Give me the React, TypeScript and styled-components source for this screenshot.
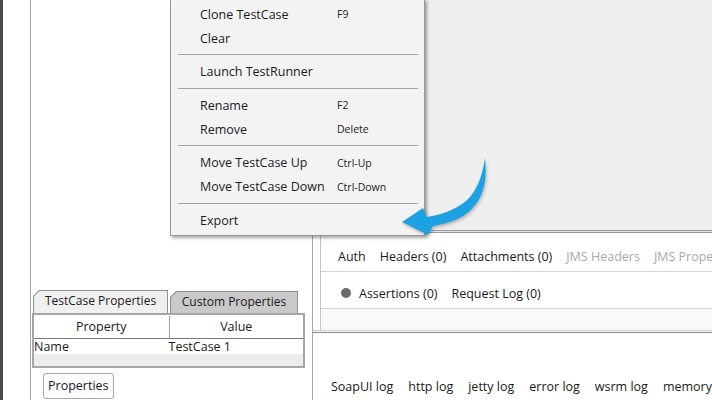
import React from "react";
import styled, { createGlobalStyle } from "styled-components";

type MenuEntry =
  | { kind: "item"; label: string; shortcut?: string }
  | { kind: "sep" };

const menuEntries: MenuEntry[] = [
  { kind: "item", label: "Clone TestCase", shortcut: "F9" },
  { kind: "item", label: "Clear" },
  { kind: "sep" },
  { kind: "item", label: "Launch TestRunner" },
  { kind: "sep" },
  { kind: "item", label: "Rename", shortcut: "F2" },
  { kind: "item", label: "Remove", shortcut: "Delete" },
  { kind: "sep" },
  { kind: "item", label: "Move TestCase Up", shortcut: "Ctrl-Up" },
  { kind: "item", label: "Move TestCase Down", shortcut: "Ctrl-Down" },
  { kind: "sep" },
  { kind: "item", label: "Export" },
];

const requestTabs = [
  { label: "Auth", disabled: false },
  { label: "Headers (0)", disabled: false },
  { label: "Attachments (0)", disabled: false },
  { label: "JMS Headers", disabled: true },
  { label: "JMS Properties", disabled: true },
];

const logTabs = ["SoapUI log", "http log", "jetty log", "error log", "wsrm log", "memory log"];

const App: React.FC = () => {
  return (
    <>
      <GlobalStyle />
      <Screen>
        <Edge />
        <Gutter />

        <LeftPanel>
          <PropsBlock>
            <TabRow>
              <PropTab $active>
                <PropTabFill $active>TestCase Properties</PropTabFill>
              </PropTab>
              <PropTab>
                <PropTabFill>Custom Properties</PropTabFill>
              </PropTab>
            </TabRow>
            <PropTable>
              <HeaderRow>
                <HeaderCell>Property</HeaderCell>
                <HeaderCell $last>Value</HeaderCell>
              </HeaderRow>
              <DataRow>
                <DataCell>Name</DataCell>
                <DataCell>TestCase 1</DataCell>
              </DataRow>
              <Filler />
            </PropTable>
            <ButtonRow>
              <PropsButton>Properties</PropsButton>
            </ButtonRow>
          </PropsBlock>
        </LeftPanel>

        <RightPanel>
          <Editor />
          <EditorRule />
          <Lower>
            <RequestPanel>
              <RequestTabs>
                {requestTabs.map((t) => (
                  <RequestTab key={t.label} $disabled={t.disabled}>
                    {t.label}
                  </RequestTab>
                ))}
              </RequestTabs>
              <AssertRow>
                <StatusDot />
                <RequestTab>Assertions (0)</RequestTab>
                <RequestTab>Request Log (0)</RequestTab>
              </AssertRow>
              <PanelFoot />
            </RequestPanel>
            <PanelRule />
            <LogArea>
              {logTabs.map((l) => (
                <LogTab key={l}>{l}</LogTab>
              ))}
            </LogArea>
          </Lower>
        </RightPanel>

        <Menu>
          {menuEntries.map((e, i) =>
            e.kind === "sep" ? (
              <MenuSep key={i} />
            ) : (
              <MenuItem key={i}>
                <MenuLabel>{e.label}</MenuLabel>
                <MenuShortcut>{e.shortcut}</MenuShortcut>
              </MenuItem>
            )
          )}
        </Menu>

        <Arrow viewBox="390 150 110 95" width="110" height="95">
          <path
            d="M485 158 C488 184 482 204 463 216 C453 222 443 224 433 226 L428 235 L402 222 L423 208 L427 217 C445 214 460 208 470 197 C479 186 483 172 485 158 Z"
            fill="#1ca2e3"
          />
        </Arrow>
      </Screen>
    </>
  );
};

const GlobalStyle = createGlobalStyle`
  html, body {
    margin: 0;
    padding: 0;
    background: #fff;
  }
  body {
    font-family: "Open Sans", "Noto Sans", sans-serif;
    color: #1c1c1c;
  }
`;

const Screen = styled.div`
  position: relative;
  display: flex;
  width: 712px;
  height: 400px;
  overflow: hidden;
  background: #fff;
`;

const Edge = styled.div`
  flex: 0 0 3px;
  background: #4a4a4a;
`;

const Gutter = styled.div`
  flex: 0 0 27px;
  background: #fff;
`;

const LeftPanel = styled.div`
  flex: 0 0 282px;
  box-sizing: border-box;
  border-left: 1px solid #a3a3a3;
  display: flex;
  flex-direction: column;
  justify-content: flex-end;
`;

const PropsBlock = styled.div`
  display: flex;
  flex-direction: column;
  padding: 0 0 1px 1px;
`;

const TabRow = styled.div`
  display: flex;
  align-items: flex-end;
  gap: 2px;
  padding-left: 1px;
  height: 23px;
`;

const PropTab = styled.div<{ $active?: boolean }>`
  width: ${(p) => (p.$active ? "135px" : "128px")};
  height: ${(p) => (p.$active ? "23px" : "22px")};
  padding: 1px 1px 0 1px;
  box-sizing: border-box;
  background: #8f8f8f;
  clip-path: polygon(6px 0, 100% 0, 100% 100%, 0 100%, 0 6px);
  display: flex;
`;

const PropTabFill = styled.div<{ $active?: boolean }>`
  flex: 1;
  background: ${(p) => (p.$active ? "#f0f0f0" : "#c9c9c9")};
  clip-path: polygon(5.5px 0, 100% 0, 100% 100%, 0 100%, 0 5.5px);
  font-size: 12px;
  line-height: 20px;
  text-align: center;
  color: #1a1a1a;
`;

const PropTable = styled.div`
  width: 273px;
  height: 55px;
  box-sizing: border-box;
  border: 2px solid #a6a6a6;
  background: #fff;
  display: flex;
  flex-direction: column;
`;

const HeaderRow = styled.div`
  display: flex;
  height: 22px;
  border-top: 1px solid #fff;
  border-bottom: 1px solid #7a7a7a;
`;

const HeaderCell = styled.div<{ $last?: boolean }>`
  width: ${(p) => (p.$last ? "134px" : "135px")};
  border-right: ${(p) => (p.$last ? "none" : "1px solid #a0a0a0")};
  font-size: 12.5px;
  line-height: 22px;
  text-align: center;
  color: #1a1a1a;
`;

const DataRow = styled.div`
  display: flex;
  height: 15px;
`;

const DataCell = styled.div`
  width: 136px;
  font-size: 12.5px;
  line-height: 15px;
  color: #1a1a1a;
`;

const Filler = styled.div`
  flex: 1;
  background: #ececec;
`;

const ButtonRow = styled.div`
  display: flex;
  padding: 5px 0 0 11px;
`;

const PropsButton = styled.div`
  height: 26px;
  box-sizing: border-box;
  padding: 0 4px;
  border: 1px solid #a8a8a8;
  border-radius: 3px;
  background: #fcfcfc;
  font-size: 12.5px;
  line-height: 24px;
  color: #1a1a1a;
`;

const RightPanel = styled.div`
  flex: 1 1 auto;
  min-width: 0;
  overflow: hidden;
  border-left: 1px solid #a8a8a8;
  display: flex;
  flex-direction: column;
`;

const Editor = styled.div`
  height: 230px;
  background: #efefef;
`;

const EditorRule = styled.div`
  height: 1px;
  border-top: 1px solid #9a9a9a;
  border-bottom: 1px solid #9a9a9a;
  background: #e4e4e4;
`;

const Lower = styled.div`
  flex: 1;
  display: flex;
  flex-direction: column;
  background: #fff;
`;

const RequestPanel = styled.div`
  margin-left: 7px;
  border-left: 1px solid #c4c4c4;
  display: flex;
  flex-direction: column;
`;

const RequestTabs = styled.div`
  display: flex;
  align-items: center;
  gap: 14px;
  height: 30px;
  margin-top: 8px;
  padding-left: 17px;
  border-bottom: 1px solid #d4d4d4;
  white-space: nowrap;
`;

const RequestTab = styled.span<{ $disabled?: boolean }>`
  font-size: 12.5px;
  color: ${(p) => (p.$disabled ? "#a9a9a9" : "#1a1a1a")};
`;

const AssertRow = styled.div`
  display: flex;
  align-items: center;
  gap: 14px;
  height: 30px;
  padding: 6px 0 0 20px;
  border-bottom: 1px solid #d4d4d4;
  white-space: nowrap;

  & > span:nth-child(2) {
    margin-left: -6px;
  }
`;

const StatusDot = styled.span`
  flex: 0 0 10px;
  height: 10px;
  border-radius: 50%;
  background: #6b6b6b;
`;

const PanelFoot = styled.div`
  height: 21px;
  background: #f9f9f9;
`;

const PanelRule = styled.div`
  height: 1px;
  border-top: 1px solid #d0d0d0;
  border-bottom: 1px solid #8e8e8e;
  background: #f4f4f4;
`;

const LogArea = styled.div`
  flex: 1;
  display: flex;
  align-items: flex-end;
  gap: 15px;
  padding: 0 0 4px 18px;
  white-space: nowrap;
`;

const LogTab = styled.span`
  font-size: 12.5px;
  line-height: 18px;
  color: #1a1a1a;
`;

const Menu = styled.div`
  position: absolute;
  left: 170px;
  top: -1px;
  width: 255px;
  box-sizing: border-box;
  padding: 2px 0 3px 0;
  background: #f3f3f3;
  border: 1px solid #979797;
  box-shadow: 2px 2px 3px rgba(0, 0, 0, 0.35);
  display: flex;
  flex-direction: column;
`;

const MenuItem = styled.div`
  display: flex;
  align-items: center;
  height: 24px;
  padding-left: 29px;
  white-space: nowrap;
`;

const MenuLabel = styled.span`
  width: 137px;
  font-size: 12.5px;
  color: #1c1c1c;
`;

const MenuShortcut = styled.span`
  font-size: 10.5px;
  color: #222;
`;

const MenuSep = styled.div`
  height: 9.5px;
  margin: 0 6px 0 7px;
  position: relative;

  &::after {
    content: "";
    position: absolute;
    left: 0;
    right: 0;
    top: 4px;
    height: 1px;
    background: #a4a4a4;
  }
`;

const Arrow = styled.svg`
  position: absolute;
  left: 390px;
  top: 150px;
  filter: drop-shadow(1px 2px 1.5px rgba(0, 0, 0, 0.25));
`;

export default App;
